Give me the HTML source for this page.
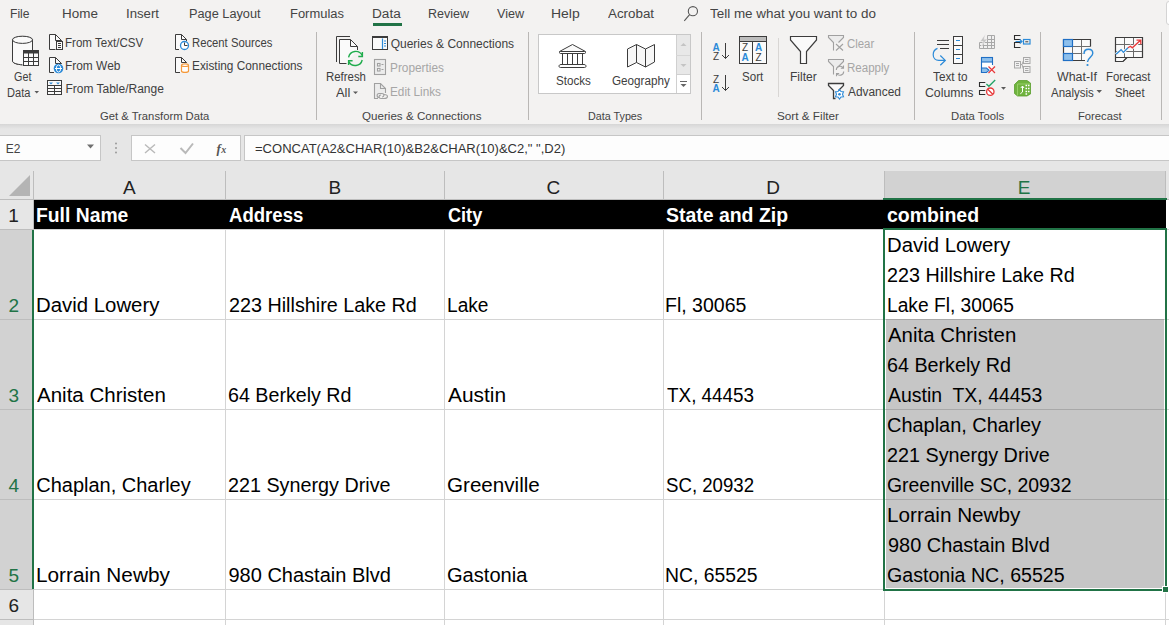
<!DOCTYPE html>
<html><head><meta charset="utf-8"><style>
html,body{margin:0;padding:0;width:1169px;height:625px;overflow:hidden;background:#ffffff;position:relative}
.t{position:absolute;white-space:pre;font-family:"Liberation Sans",sans-serif;transform-origin:0 0}
.r{position:absolute}
</style></head><body>
<div class="r" style="left:0px;top:0px;width:1169px;height:124px;background:#f3f2f1;"></div>
<div class="r" style="left:0px;top:124px;width:1169px;height:47px;background:#e6e6e6;"></div>
<div class="r" style="left:0;top:124px;width:1169px;height:5px;background:linear-gradient(#d6d6d6,#e6e6e6)"></div>
<div class="r" style="left:1166px;top:1px;width:12px;height:24px;background:#ffffff;border:1px solid #d4d4d4;border-radius:3px;box-sizing:border-box;"></div>
<div class="r" style="left:538px;top:34px;width:153px;height:60px;background:#ffffff;border:1px solid #c8c8c8;box-sizing:border-box;"></div>
<div class="r" style="left:676px;top:35px;width:14px;height:39px;background:#e8e8e8;border-left:1px solid #d0d0d0;"></div>
<div class="r" style="left:676px;top:55px;width:14px;height:1px;background:#d6d6d6;"></div>
<div class="r" style="left:676px;top:74px;width:14px;height:19px;background:#ffffff;border-left:1px solid #d0d0d0;border-top:1px solid #d0d0d0;"></div>
<svg class="r" style="left:676px;top:34px" width="15" height="60"><path d="M4.5 12 L7.5 9 L10.5 12 Z" fill="#c4c4c4"/><path d="M4.5 30 L7.5 33 L10.5 30 Z" fill="#c4c4c4"/><path d="M4 47.5 H11" stroke="#666" stroke-width="1"/><path d="M4.5 50 L7.5 53 L10.5 50 Z" fill="#666"/></svg>
<div class="r" style="left:373px;top:23px;width:29px;height:3px;background:#217346;"></div>
<div class="r" style="left:316px;top:32px;width:1px;height:88px;background:#b9b7b5;"></div>
<div class="r" style="left:528px;top:32px;width:1px;height:88px;background:#b9b7b5;"></div>
<div class="r" style="left:701px;top:32px;width:1px;height:88px;background:#b9b7b5;"></div>
<div class="r" style="left:914px;top:32px;width:1px;height:88px;background:#b9b7b5;"></div>
<div class="r" style="left:1040px;top:32px;width:1px;height:88px;background:#b9b7b5;"></div>
<div class="r" style="left:1161px;top:32px;width:1px;height:88px;background:#b9b7b5;"></div>
<div class="r" style="left:778px;top:38px;width:1px;height:59px;background:#d8d6d4;"></div>
<div class="r" style="left:-1px;top:135px;width:101px;height:25px;background:#fdfdfd;border:1px solid #c6c6c6;box-sizing:border-box;width:102px;height:26px;"></div>
<div class="r" style="left:131px;top:135px;width:110px;height:26px;background:#fdfdfd;border:1px solid #c6c6c6;box-sizing:border-box;"></div>
<div class="r" style="left:244px;top:135px;width:930px;height:26px;background:#fdfdfd;border:1px solid #c6c6c6;box-sizing:border-box;"></div>
<div class="r" style="left:0px;top:171px;width:1169px;height:28px;background:#e6e6e6;"></div>
<div class="r" style="left:0px;top:199px;width:33px;height:426px;background:#e6e6e6;"></div>
<div class="r" style="left:0px;top:230px;width:32px;height:359px;background:#d2d2d2;"></div>
<div class="r" style="left:885px;top:171px;width:280px;height:27px;background:#d2d2d2;"></div>
<div class="r" style="left:34px;top:200px;width:1135px;height:425px;background:#ffffff;"></div>
<div class="r" style="left:225px;top:171px;width:1px;height:28px;background:#bdbdbd;"></div>
<div class="r" style="left:225px;top:200px;width:1px;height:425px;background:#d4d4d4;"></div>
<div class="r" style="left:444px;top:171px;width:1px;height:28px;background:#bdbdbd;"></div>
<div class="r" style="left:444px;top:200px;width:1px;height:425px;background:#d4d4d4;"></div>
<div class="r" style="left:663px;top:171px;width:1px;height:28px;background:#bdbdbd;"></div>
<div class="r" style="left:663px;top:200px;width:1px;height:425px;background:#d4d4d4;"></div>
<div class="r" style="left:884px;top:171px;width:1px;height:28px;background:#bdbdbd;"></div>
<div class="r" style="left:884px;top:200px;width:1px;height:425px;background:#d4d4d4;"></div>
<div class="r" style="left:1165px;top:171px;width:1px;height:28px;background:#bdbdbd;"></div>
<div class="r" style="left:1165px;top:200px;width:1px;height:425px;background:#d4d4d4;"></div>
<div class="r" style="left:34px;top:229px;width:1135px;height:1px;background:#d4d4d4;"></div>
<div class="r" style="left:0px;top:229px;width:33px;height:1px;background:#bdbdbd;"></div>
<div class="r" style="left:34px;top:319px;width:1135px;height:1px;background:#d4d4d4;"></div>
<div class="r" style="left:0px;top:319px;width:33px;height:1px;background:#bdbdbd;"></div>
<div class="r" style="left:34px;top:409px;width:1135px;height:1px;background:#d4d4d4;"></div>
<div class="r" style="left:0px;top:409px;width:33px;height:1px;background:#bdbdbd;"></div>
<div class="r" style="left:34px;top:499px;width:1135px;height:1px;background:#d4d4d4;"></div>
<div class="r" style="left:0px;top:499px;width:33px;height:1px;background:#bdbdbd;"></div>
<div class="r" style="left:34px;top:589px;width:1135px;height:1px;background:#d4d4d4;"></div>
<div class="r" style="left:0px;top:589px;width:33px;height:1px;background:#bdbdbd;"></div>
<div class="r" style="left:34px;top:619px;width:1135px;height:1px;background:#d4d4d4;"></div>
<div class="r" style="left:0px;top:619px;width:33px;height:1px;background:#bdbdbd;"></div>
<div class="r" style="left:0px;top:199px;width:1169px;height:1px;background:#bdbdbd;"></div>
<div class="r" style="left:33px;top:171px;width:1px;height:454px;background:#bdbdbd;"></div>
<div class="r" style="left:883px;top:198px;width:284px;height:2px;background:#217346;"></div>
<div class="r" style="left:34px;top:200px;width:1132px;height:29px;background:#000000;"></div>
<div class="r" style="left:886px;top:319px;width:278px;height:269px;background:#c6c6c6;"></div>
<div class="r" style="left:886px;top:409px;width:278px;height:1px;background:#a8a8a8;"></div>
<div class="r" style="left:886px;top:499px;width:278px;height:1px;background:#a8a8a8;"></div>
<div class="r" style="left:886px;top:319px;width:278px;height:1px;background:#a8a8a8;"></div>
<div class="r" style="left:883px;top:228px;width:284px;height:2px;background:#217346;"></div>
<div class="r" style="left:883px;top:228px;width:2px;height:363px;background:#217346;"></div>
<div class="r" style="left:1165px;top:228px;width:2px;height:359px;background:#217346;"></div>
<div class="r" style="left:883px;top:589px;width:280px;height:2px;background:#217346;"></div>
<div class="r" style="left:1162px;top:586px;width:7px;height:7px;background:#ffffff;"></div>
<div class="r" style="left:1163px;top:587px;width:5px;height:5px;background:#217346;"></div>
<div class="r" style="left:32px;top:230px;width:2px;height:359px;background:#217346;"></div>
<svg class="r" style="left:0;top:171px" width="33" height="28"><polygon points="9,25 30,25 30,4" fill="#b4b4b4"/></svg>
<div class="t" style="left:10.29px;top:7.85px;font-size:12px;line-height:12px;color:#444444;transform:scaleX(1.0112);">File</div>
<div class="t" style="left:62.18px;top:7.85px;font-size:12px;line-height:12px;color:#444444;transform:scaleX(1.1213);">Home</div>
<div class="t" style="left:125.79px;top:7.85px;font-size:12px;line-height:12px;color:#444444;transform:scaleX(1.1003);">Insert</div>
<div class="t" style="left:189.24px;top:7.85px;font-size:12px;line-height:12px;color:#444444;transform:scaleX(1.0617);">Page Layout</div>
<div class="t" style="left:289.92px;top:7.85px;font-size:12px;line-height:12px;color:#444444;transform:scaleX(1.0782);">Formulas</div>
<div class="t" style="left:371.86px;top:7.85px;font-size:12px;line-height:12px;color:#444444;transform:scaleX(1.1352);">Data</div>
<div class="t" style="left:427.96px;top:7.85px;font-size:12px;line-height:12px;color:#444444;transform:scaleX(1.0417);">Review</div>
<div class="t" style="left:496.89px;top:7.85px;font-size:12px;line-height:12px;color:#444444;transform:scaleX(1.0506);">View</div>
<div class="t" style="left:550.84px;top:7.85px;font-size:12px;line-height:12px;color:#444444;transform:scaleX(1.1638);">Help</div>
<div class="t" style="left:608.00px;top:7.85px;font-size:12px;line-height:12px;color:#444444;transform:scaleX(1.1138);">Acrobat</div>
<div class="t" style="left:709.66px;top:7.85px;font-size:12px;line-height:12px;color:#444444;transform:scaleX(1.1202);">Tell me what you want to do</div>
<div class="t" style="left:65.44px;top:36.85px;font-size:12px;line-height:12px;color:#404040;transform:scaleX(0.9637);">From Text/CSV</div>
<div class="t" style="left:65.41px;top:59.85px;font-size:12px;line-height:12px;color:#404040;transform:scaleX(0.9926);">From Web</div>
<div class="t" style="left:65.40px;top:82.85px;font-size:12px;line-height:12px;color:#404040;">From Table/Range</div>
<div class="t" style="left:191.56px;top:36.85px;font-size:12px;line-height:12px;color:#404040;transform:scaleX(0.9405);">Recent Sources</div>
<div class="t" style="left:191.51px;top:59.85px;font-size:12px;line-height:12px;color:#404040;transform:scaleX(0.9864);">Existing Connections</div>
<div class="t" style="left:390.70px;top:37.85px;font-size:12px;line-height:12px;color:#404040;">Queries &amp; Connections</div>
<div class="t" style="left:390.32px;top:61.85px;font-size:12px;line-height:12px;color:#a6a6a6;transform:scaleX(0.9850);">Properties</div>
<div class="t" style="left:390.32px;top:85.85px;font-size:12px;line-height:12px;color:#a6a6a6;transform:scaleX(0.9802);">Edit Links</div>
<div class="t" style="left:846.93px;top:37.85px;font-size:12px;line-height:12px;color:#a6a6a6;transform:scaleX(0.9498);">Clear</div>
<div class="t" style="left:846.54px;top:61.85px;font-size:12px;line-height:12px;color:#a6a6a6;transform:scaleX(0.9605);">Reapply</div>
<div class="t" style="left:847.50px;top:85.85px;font-size:12px;line-height:12px;color:#404040;transform:scaleX(0.9905);">Advanced</div>
<div class="t" style="left:14.16px;top:70.85px;font-size:12px;line-height:12px;color:#404040;transform:scaleX(0.8984);">Get</div>
<div class="t" style="left:6.58px;top:86.85px;font-size:12px;line-height:12px;color:#404040;transform:scaleX(0.9221);">Data</div>
<div class="t" style="left:326.35px;top:70.85px;font-size:12px;line-height:12px;color:#404040;transform:scaleX(0.9502);">Refresh</div>
<div class="t" style="left:336.00px;top:86.85px;font-size:12px;line-height:12px;color:#404040;transform:scaleX(1.0714);">All</div>
<div class="t" style="left:555.52px;top:74.85px;font-size:12px;line-height:12px;color:#404040;transform:scaleX(0.9687);">Stocks</div>
<div class="t" style="left:611.82px;top:74.85px;font-size:12px;line-height:12px;color:#404040;transform:scaleX(0.9745);">Geography</div>
<div class="t" style="left:741.72px;top:70.85px;font-size:12px;line-height:12px;color:#404040;transform:scaleX(0.9628);">Sort</div>
<div class="t" style="left:790.40px;top:70.85px;font-size:12px;line-height:12px;color:#404040;transform:scaleX(1.0039);">Filter</div>
<div class="t" style="left:932.61px;top:70.85px;font-size:12px;line-height:12px;color:#404040;transform:scaleX(0.9798);">Text to</div>
<div class="t" style="left:924.89px;top:86.85px;font-size:12px;line-height:12px;color:#404040;transform:scaleX(1.0238);">Columns</div>
<div class="t" style="left:1057.10px;top:70.85px;font-size:12px;line-height:12px;color:#404040;transform:scaleX(1.0311);">What-If</div>
<div class="t" style="left:1051.00px;top:86.85px;font-size:12px;line-height:12px;color:#404040;transform:scaleX(0.9594);">Analysis</div>
<div class="t" style="left:1106.45px;top:70.85px;font-size:12px;line-height:12px;color:#404040;transform:scaleX(0.9518);">Forecast</div>
<div class="t" style="left:1114.53px;top:86.85px;font-size:12px;line-height:12px;color:#404040;transform:scaleX(0.9416);">Sheet</div>
<div class="t" style="left:100.01px;top:110.76px;font-size:11.4px;line-height:11.4px;color:#444444;transform:scaleX(0.9873);">Get &amp; Transform Data</div>
<div class="t" style="left:362.49px;top:110.76px;font-size:11.4px;line-height:11.4px;color:#444444;transform:scaleX(1.0198);">Queries &amp; Connections</div>
<div class="t" style="left:587.55px;top:110.76px;font-size:11.4px;line-height:11.4px;color:#444444;transform:scaleX(0.9448);">Data Types</div>
<div class="t" style="left:777.18px;top:110.76px;font-size:11.4px;line-height:11.4px;color:#444444;transform:scaleX(1.0303);">Sort &amp; Filter</div>
<div class="t" style="left:950.71px;top:110.76px;font-size:11.4px;line-height:11.4px;color:#444444;transform:scaleX(0.9924);">Data Tools</div>
<div class="t" style="left:1078.11px;top:110.76px;font-size:11.4px;line-height:11.4px;color:#444444;transform:scaleX(0.9839);">Forecast</div>
<div class="t" style="left:5.70px;top:142.85px;font-size:12px;line-height:12px;color:#444444;">E2</div>
<div class="t" style="left:255.38px;top:143.43px;font-size:12.5px;line-height:12.5px;color:#333333;transform:scaleX(1.0415);">=CONCAT(A2&amp;CHAR(10)&amp;B2&amp;CHAR(10)&amp;C2," ",D2)</div>
<div class="t" style="left:123.00px;top:177.93px;font-size:19px;line-height:19px;color:#222222;">A</div>
<div class="t" style="left:328.40px;top:177.93px;font-size:19px;line-height:19px;color:#222222;">B</div>
<div class="t" style="left:546.50px;top:177.93px;font-size:19px;line-height:19px;color:#222222;">C</div>
<div class="t" style="left:766.35px;top:177.93px;font-size:19px;line-height:19px;color:#222222;">D</div>
<div class="t" style="left:1017.80px;top:177.93px;font-size:19px;line-height:19px;color:#217346;">E</div>
<div class="t" style="left:8.30px;top:205.93px;font-size:19px;line-height:19px;color:#222222;">1</div>
<div class="t" style="left:8.55px;top:295.93px;font-size:19px;line-height:19px;color:#217346;">2</div>
<div class="t" style="left:8.60px;top:385.93px;font-size:19px;line-height:19px;color:#217346;">3</div>
<div class="t" style="left:8.60px;top:475.93px;font-size:19px;line-height:19px;color:#217346;">4</div>
<div class="t" style="left:8.50px;top:565.93px;font-size:19px;line-height:19px;color:#217346;">5</div>
<div class="t" style="left:8.45px;top:595.93px;font-size:19px;line-height:19px;color:#222222;">6</div>
<div class="t" style="left:35.74px;top:205.08px;font-size:20px;line-height:20px;color:#ffffff;font-weight:bold;transform:scaleX(0.9658);">Full Name</div>
<div class="t" style="left:228.94px;top:205.08px;font-size:20px;line-height:20px;color:#ffffff;font-weight:bold;transform:scaleX(0.9288);">Address</div>
<div class="t" style="left:447.88px;top:205.08px;font-size:20px;line-height:20px;color:#ffffff;font-weight:bold;transform:scaleX(0.9051);">City</div>
<div class="t" style="left:666.02px;top:205.08px;font-size:20px;line-height:20px;color:#ffffff;font-weight:bold;transform:scaleX(0.9718);">State and Zip</div>
<div class="t" style="left:887.22px;top:205.08px;font-size:20px;line-height:20px;color:#ffffff;font-weight:bold;transform:scaleX(0.9751);">combined</div>
<div class="t" style="left:36.07px;top:295.08px;font-size:20px;line-height:20px;color:#000000;transform:scaleX(1.0184);">David Lowery</div>
<div class="t" style="left:228.51px;top:295.08px;font-size:20px;line-height:20px;color:#000000;transform:scaleX(0.9878);">223 Hillshire Lake Rd</div>
<div class="t" style="left:447.47px;top:295.08px;font-size:20px;line-height:20px;color:#000000;transform:scaleX(0.9559);">Lake</div>
<div class="t" style="left:665.44px;top:295.08px;font-size:20px;line-height:20px;color:#000000;transform:scaleX(0.9753);">Fl, 30065</div>
<div class="t" style="left:37.20px;top:385.08px;font-size:20px;line-height:20px;color:#000000;transform:scaleX(1.0257);">Anita Christen</div>
<div class="t" style="left:228.42px;top:385.08px;font-size:20px;line-height:20px;color:#000000;transform:scaleX(0.9830);">64 Berkely Rd</div>
<div class="t" style="left:448.00px;top:385.08px;font-size:20px;line-height:20px;color:#000000;transform:scaleX(1.0442);">Austin</div>
<div class="t" style="left:666.62px;top:385.08px;font-size:20px;line-height:20px;color:#000000;transform:scaleX(0.9440);">TX, 44453</div>
<div class="t" style="left:36.20px;top:475.08px;font-size:20px;line-height:20px;color:#000000;">Chaplan, Charley</div>
<div class="t" style="left:228.41px;top:475.08px;font-size:20px;line-height:20px;color:#000000;transform:scaleX(0.9877);">221 Synergy Drive</div>
<div class="t" style="left:446.97px;top:475.08px;font-size:20px;line-height:20px;color:#000000;transform:scaleX(1.0306);">Greenville</div>
<div class="t" style="left:666.16px;top:475.08px;font-size:20px;line-height:20px;color:#000000;transform:scaleX(0.9320);">SC, 20932</div>
<div class="t" style="left:35.54px;top:565.08px;font-size:20px;line-height:20px;color:#000000;transform:scaleX(1.0377);">Lorrain Newby</div>
<div class="t" style="left:228.50px;top:565.08px;font-size:20px;line-height:20px;color:#000000;">980 Chastain Blvd</div>
<div class="t" style="left:447.00px;top:565.08px;font-size:20px;line-height:20px;color:#000000;transform:scaleX(1.0038);">Gastonia</div>
<div class="t" style="left:665.45px;top:565.08px;font-size:20px;line-height:20px;color:#000000;transform:scaleX(0.9689);">NC, 65525</div>
<div class="t" style="left:886.77px;top:235.08px;font-size:20px;line-height:20px;color:#000000;transform:scaleX(1.0167);">David Lowery</div>
<div class="t" style="left:887.41px;top:265.08px;font-size:20px;line-height:20px;color:#000000;transform:scaleX(0.9872);">223 Hillshire Lake Rd</div>
<div class="t" style="left:886.87px;top:295.08px;font-size:20px;line-height:20px;color:#000000;transform:scaleX(0.9592);">Lake Fl, 30065</div>
<div class="t" style="left:888.40px;top:325.08px;font-size:20px;line-height:20px;color:#000000;transform:scaleX(1.0209);">Anita Christen</div>
<div class="t" style="left:887.41px;top:355.08px;font-size:20px;line-height:20px;color:#000000;transform:scaleX(0.9862);">64 Berkely Rd</div>
<div class="t" style="left:888.40px;top:385.08px;font-size:20px;line-height:20px;color:#000000;transform:scaleX(0.9721);">Austin  TX, 44453</div>
<div class="t" style="left:887.40px;top:415.08px;font-size:20px;line-height:20px;color:#000000;transform:scaleX(0.9961);">Chaplan, Charley</div>
<div class="t" style="left:887.41px;top:445.08px;font-size:20px;line-height:20px;color:#000000;transform:scaleX(0.9895);">221 Synergy Drive</div>
<div class="t" style="left:887.43px;top:475.08px;font-size:20px;line-height:20px;color:#000000;transform:scaleX(0.9702);">Greenville SC, 20932</div>
<div class="t" style="left:886.74px;top:505.08px;font-size:20px;line-height:20px;color:#000000;transform:scaleX(1.0345);">Lorrain Newby</div>
<div class="t" style="left:887.50px;top:535.08px;font-size:20px;line-height:20px;color:#000000;transform:scaleX(0.9963);">980 Chastain Blvd</div>
<div class="t" style="left:887.42px;top:565.08px;font-size:20px;line-height:20px;color:#000000;transform:scaleX(0.9805);">Gastonia NC, 65525</div>
<svg style="position:absolute;left:0;top:0" width="1169" height="170" viewBox="0 0 1169 170">
<g fill="none" stroke="#3c3c3c" stroke-width="1">
<!-- Get Data cylinder -->
<path d="M12.5 40 V61 C12.5 63 17 64.5 22.5 64.8" fill="#fafafa"/>
<path d="M12.5 40 C12.5 35.5 32.5 35.5 32.5 40 V50" fill="#fafafa"/>
<path d="M12.5 40 V61 C12.5 63.5 22 65 23 65 L23 50 H32.5 V40" fill="#fafafa" stroke="none"/>
<path d="M12.5 40 V61 C12.5 63 17 64.5 22.5 64.8"/>
<path d="M32.5 40 V50"/>
<ellipse cx="22.5" cy="39.8" rx="10" ry="3.6" fill="#fafafa"/>
<rect x="23.5" y="50.5" width="15" height="15" fill="#fafafa"/>
<rect x="23.5" y="50.5" width="15" height="3" fill="#3c3c3c" stroke="none"/>
<path d="M28.5 53 V65.5 M33.5 53 V65.5 M23.5 57.5 H38.5 M23.5 61.5 H38.5"/>
<!-- From Text/CSV -->
<path d="M55.5 49.5 H49.5 V34.5 H55.5 L61.5 40.5 V41" fill="#fafafa"/>
<path d="M55.5 34.5 V40.5 H61.5"/>
<rect x="56.5" y="41.5" width="6" height="8" fill="#fafafa"/>
<path d="M58 43.5 H61 M58 45.5 H61 M58 47.5 H61"/>
<!-- From Web -->
<path d="M54 72.5 H49.5 V57.5 H55.5 L61.5 63.5 V64" fill="#fafafa"/>
<path d="M55.5 57.5 V63.5 H61.5"/>
<!-- From Table/Range -->
<rect x="47.5" y="80.5" width="14" height="14" fill="#fafafa"/>
<path d="M47.5 85.5 H61.5 M47.5 88.5 H61.5 M47.5 91.5 H61.5 M54.5 85.5 V94.5"/>
<!-- Recent Sources -->
<path d="M179 49.5 H175.5 V34.5 H181.5 L186.5 39.5 V41" fill="#fafafa"/>
<path d="M181.5 34.5 V39.5 H186.5"/>
<!-- Existing Connections -->
<path d="M180 72.5 H175.5 V57.5 H181.5 L186.5 62.5 V63" fill="#fafafa"/>
<path d="M181.5 57.5 V62.5 H186.5"/>
<!-- Refresh All -->
<path d="M336.5 62 V36.5 H350"/>
<path d="M346.5 63.5 H339.5 V39.5 H350.5 L357.5 46.5 V50" fill="#fafafa"/>
<path d="M350.5 39.5 V46.5 H357.5"/>
<!-- Queries & Connections -->
<rect x="372.5" y="36.5" width="15" height="13" fill="#fafafa"/>
<path d="M372.5 37.5 H387.5"/>
<!-- Stocks bank -->
<path d="M559.5 51.5 L572.5 44.5 L585.5 51.5 Z" fill="#fafafa" stroke-linejoin="round"/>
<rect x="559.5" y="51.5" width="26" height="2" rx="1" fill="#ffffff"/>
<path d="M562.5 54 V64.5 M567.5 54 V64.5 M572.5 54 V64.5 M577.5 54 V64.5 M582.5 54 V64.5"/>
<path d="M561 64.5 H584 C585.5 64.5 586 65.5 586 66 C586 67 585.5 67.5 584.5 67.5 H560.5 C559.5 67.5 559 67 559 66 C559 65.5 559.5 64.5 561 64.5 Z" fill="#ffffff"/>
<!-- Geography map -->
<path d="M627.5 49 L636.5 44.5 L645.5 49 L654.5 44.5 V62 L645.5 67 L636.5 62.5 L627.5 67 Z" fill="#f7f7f7" stroke-linejoin="round"/>
<path d="M636.5 44.5 V62.5 M645.5 49 V67"/>
<!-- Sort box -->
<rect x="739.5" y="36.5" width="27" height="27" fill="#fafafa"/>
<rect x="740" y="37" width="26" height="4" fill="#bdbdbd" stroke="none"/>
<path d="M739.5 41.5 H766.5 M752.5 41.5 V63.5"/>
<!-- AZ / ZA arrows -->
<path d="M725.5 43 V58.5 M722 55 L725.5 58.5 L729 55"/>
<path d="M725.5 75 V90.5 M722 87 L725.5 90.5 L729 87"/>
<!-- Filter -->
<path d="M790.5 36.5 H816.5 V40 L806.5 51.5 V63.5 H800.5 V51.5 L790.5 40 Z" fill="#fafafa" stroke-linejoin="miter" stroke-width="1.2"/>
<!-- Advanced funnel -->
<path d="M828.5 83.5 H843.5 V85.5 L838.5 90.5 V91 H834 L828.5 85.5 Z" fill="#fafafa" stroke="none"/><path d="M835.5 98.5 H833.5 V90.5 L828.5 85.5 V83.5 H843.5 V85.5 L838.5 90.5" stroke-width="1.3"/>
<!-- Text to Columns -->
<path d="M937 40.5 H949 M937 44.5 H949 M940 48.5 H949" stroke-width="1.1"/>
<rect x="953.5" y="36.5" width="9" height="27" fill="#fafafa"/>
<path d="M953.5 45.5 H962.5 M953.5 54.5 H962.5"/>
<!-- What-If grid -->
<rect x="1063.5" y="39.5" width="27" height="21" fill="#fafafa" stroke="none"/>
<path d="M1072.5 39.5 V60.5 M1081.5 39.5 V60.5 M1063.5 46.5 H1090.5 M1063.5 53.5 H1084" stroke="#6e6e6e"/>
<path d="M1063.5 39.5 H1090.5 V46.5 M1063.5 39.5 V60.5 H1085" stroke-width="1.2"/>
<!-- Forecast sheet -->
<path d="M1115.5 37.5 H1142.5 V57.5 H1127 L1123 61.5 H1115.5 Z" fill="#fafafa"/>
<path d="M1124.5 37.5 V57.5 M1133.5 37.5 V57.5 M1115.5 44.5 H1142.5 M1115.5 51.5 H1142.5" stroke="#6a6a6a"/>
<path d="M1115.5 37.5 H1142.5 V57.5 H1115.5 Z M1115.5 57.5 V61.5 H1123 L1127 57.5" stroke-width="1.2"/>
</g>
<!-- blue / colored elements -->
<g fill="none" stroke-width="1.2">
<circle cx="58.5" cy="68.5" r="4.8" fill="#2b8ad8" stroke="none"/>
<path d="M55 68.5 H62" stroke="#ffffff" stroke-width="1"/>
<ellipse cx="58.5" cy="68.5" rx="2.2" ry="3.6" stroke="#ffffff" stroke-width="0.9"/>
<path d="M49 82.5 H53 L51 84.5 Z M56 82.5 H60 L58 84.5 Z" fill="#2b8ad8" stroke="none"/>
<circle cx="184.5" cy="45.5" r="4" fill="#ffffff" stroke="#2b8ad8" stroke-width="1.3"/>
<path d="M184.5 42.5 V45.5 H187.5" stroke="#3c3c3c" stroke-width="1"/>
<path d="M181.5 65.2 C181.5 63.3 188.5 63.3 188.5 65.2 V71 C188.5 72.9 181.5 72.9 181.5 71 Z" fill="#ffffff" stroke="#f59a3c" stroke-width="1.2"/>
<path d="M181.5 65.2 C181.5 67 188.5 67 188.5 65.2" stroke="#f59a3c" stroke-width="1.1"/>
<path d="M348.6 57.3 A7.2 7.2 0 0 1 362.2 55.5 M362.2 60 A7.2 7.2 0 0 1 348.8 61.6" stroke="#1fac4c" stroke-width="1.4"/>
<path d="M358.3 56.5 H362.4 V52 M352.6 60.7 H348.6 V65" stroke="#1fac4c" stroke-width="1.4"/>
<path d="M382.5 38.5 V49" stroke="#2b8ad8" stroke-width="1.2"/>
<path d="M384 41 H386 M384 43.5 H386 M384 46 H386" stroke="#2b8ad8" stroke-width="1.2"/>
<path d="M937.5 48.4 C934.5 49.5 933.2 52 933.2 54.7 C933.2 58 935.5 60.4 938.8 60.4 H945.2 M940.3 55.5 L945.3 60.4 L940.3 65.3" stroke="#2b8ad8" stroke-width="1.2"/>
<path d="M956 40.5 H960 M956 49.5 H960 M956 58.5 H960" stroke="#2b8ad8" stroke-width="1.1"/>
<rect x="1063.5" y="39.5" width="9" height="7" fill="#8ec0ec" stroke="#1f6fc5"/>
<rect x="1063.5" y="53.5" width="9" height="7" fill="#8ec0ec" stroke="#1f6fc5"/>
<path d="M1084 54 C1084 51 1086 49.3 1088.5 49.3 C1091 49.3 1092.8 51 1092.8 53.3 C1092.8 56.5 1088 57.5 1087.5 62" stroke="#f3f2f1" stroke-width="3.5"/>
<path d="M1084 54 C1084 51 1086 49.3 1088.5 49.3 C1091 49.3 1092.8 51 1092.8 53.3 C1092.8 56.5 1088 57.5 1087.5 62" stroke="#2b8ad8" stroke-width="1.4"/>
<circle cx="1087.5" cy="65" r="1.1" fill="#2b8ad8" stroke="none"/>
<path d="M1116 54.3 L1121.1 49.7 L1123.4 52.4 L1128 47.8 L1130.4 46.2 L1132.3 47.8 L1140.8 40.1" stroke="#fafafa" stroke-width="3"/>
<path d="M1116 54.3 L1121.1 49.7 L1123.4 52.4 L1128 47.8" stroke="#2b8ad8" stroke-width="1.3"/>
<path d="M1128 47.8 L1130.4 46.2 L1132.3 47.8 L1140.8 40.1 M1136.5 40.1 H1140.8 V44.3" stroke="#e8393a" stroke-width="1.3"/>
<!-- Advanced gear -->
<path d="M839.5 89.5 L841 91.5 L843.5 91.7 L842.5 94.3 L843.5 96.8 L841 97 L839.5 99 L838 97 L835.5 96.8 L836.5 94.3 L835.5 91.7 L838 91.5 Z" fill="#ffffff" stroke="#2b8ad8" stroke-width="1.1"/>
<circle cx="839.5" cy="94.3" r="1.3" fill="#2b8ad8" stroke="none"/>
</g>
<!-- disabled gray icons -->
<g fill="none" stroke="#a0a0a0" stroke-width="1.1">
<rect x="374.5" y="59.5" width="11" height="15" fill="#ececec"/>
<rect x="377.5" y="63.5" width="2.5" height="2.5" fill="#f6f6f6"/>
<rect x="377.5" y="68.5" width="2.5" height="2.5" fill="#f6f6f6"/>
<path d="M381.5 64.5 H383.5 M381.5 69.5 H383.5"/>
<path d="M378 98.5 H374.5 V83.5 H380.5 L385.5 88.5 V93" fill="#ececec"/>
<path d="M380.5 83.5 V88.5 H385.5"/>
<path d="M379 97.5 C376.5 97.5 376.5 93.5 379 93.5 H382 C384.5 93.5 384.5 97 382 97 M384 94.5 C386.5 94.5 387.5 95 387.5 96.5 C387.5 98 386.5 98.5 384 98.5 H381 C378.5 98.5 378.5 95 381 95" stroke-width="1.1"/>
<!-- clear funnel -->
<path d="M828.5 35.5 H843.5 V37.5 L838.5 42.5 H834 L828.5 37.5 Z" fill="#ececec" stroke="none"/><path d="M833.5 50.5 V42.5 L828.5 37.5 V35.5 H843.5 V37.5 L838.5 42.5"/>
<path d="M836 44 L843 50.5 M843 44 L836 50.5"/>
<!-- reapply -->
<path d="M828.5 59.5 H843.5 V61.5 L838.5 66.5 H834 L828.5 61.5 Z" fill="#ececec" stroke="none"/><path d="M833.5 74.5 V66.5 L828.5 61.5 V59.5 H843.5 V61.5 L838.5 66.5"/>
<path d="M836.3 70 A3.8 3.8 0 0 1 843.3 68 M843.7 71.5 A3.8 3.8 0 0 1 836.7 73.5 M843.5 65.5 V68.3 H840.8 M836.5 76.3 V73.5 H839.2" stroke-width="1.1"/>
</g>

<g fill="none" stroke-width="1">
<!-- flash fill -->
<path d="M979.5 42.5 V48.5 H994.5 V35.5 H987.5 V39.5 H983.5 V42.5 Z M979.5 45.5 H994.5 M983.5 42.5 H994.5 M987.5 39.5 H994.5 M983.5 42.5 V48.5 M987.5 39.5 V48.5 M991.5 35.5 V48.5" stroke="#a8a8a8" fill="#f0f0f0"/>
<path d="M985.5 34 L980 41.5 H983.2 L981 47 L987 39.5 H984 Z" fill="#c4c4c4" stroke="#f3f2f1" stroke-width="0.6"/>
<!-- remove duplicates -->
<rect x="981.5" y="57.5" width="11" height="15" fill="#ffffff" stroke="none"/>
<rect x="981.5" y="57.5" width="11" height="4.5" fill="#8ec0ec" stroke="#1f6fc5" stroke-width="1.1"/>
<path d="M981.5 62 V72.5 H985 M992.5 62 V65" stroke="#1f6fc5" stroke-width="1.1"/>
<path d="M981.5 68 H986.5 L989 70.3 L986.5 72.5 H981.5 Z" fill="#8ec0ec" stroke="#1f6fc5" stroke-width="1.1"/>
<path d="M988.5 66.5 L995 73 M995 66.5 L988.5 73" stroke="#e8393a" stroke-width="1.2"/>
<!-- data validation -->
<path d="M985.3 82.5 H979.5 V86.5 H985.3 M985.3 90.5 H979.5 V94.5 H985.3" stroke="#2c2c2c" stroke-width="1.1"/>
<path d="M986.4 84 L988.9 86.3 L995.2 80" stroke="#21a366" stroke-width="1.3"/>
<circle cx="990.3" cy="91.7" r="3.7" stroke="#e8393a" stroke-width="1.3" fill="#ffffff"/>
<path d="M987.8 89.2 L992.8 94.2" stroke="#e8393a" stroke-width="1.3"/>
<!-- consolidate -->
<path d="M1020.5 35.5 H1014.5 V39.5 H1020.5 M1020.5 42.5 H1014.5 V47.5 H1020.5" stroke="#2c2c2c" stroke-width="1.1"/>
<path d="M1015.5 41.5 H1022 M1019.8 39.3 L1022 41.5 L1019.8 43.7" stroke="#2b8ad8" stroke-width="1.2"/>
<rect x="1023.5" y="39.5" width="6.5" height="4.5" stroke="#2b8ad8" stroke-width="1.2"/>
<path d="M1025.3 41.8 H1028.3" stroke="#3c3c3c" stroke-width="1"/>
<!-- relationships -->
<g stroke="#a8a8a8">
<rect x="1014.5" y="61.5" width="6" height="6.5" fill="#f0f0f0"/>
<rect x="1023.5" y="57.5" width="6.5" height="6" fill="#f0f0f0"/>
<rect x="1023.5" y="66.5" width="6.5" height="6" fill="#f0f0f0"/>
<path d="M1016 63.5 H1019 M1016 65.5 H1019 M1025 59.5 H1028.5 M1025 61.5 H1028.5 M1025 68.5 H1028.5 M1025 70.5 H1028.5 M1020.5 64.5 H1022 L1023.5 60.5 M1022 64.5 L1023.5 69.5"/>
</g>
<!-- data model -->
<path d="M1014.5 84.5 L1018.5 80.5 H1027 L1030.5 83 V94 L1027 96 H1017.5 L1014.5 93.5 Z" fill="#6fb33e" stroke="#5a9e2d" stroke-width="0.8"/>
<path d="M1017.5 84 H1030 M1017.5 84 V95.5" stroke="#9ad16a" stroke-width="0.9"/>
<path d="M1025.5 85.5 h1.6 M1028 85.5 h1.5 M1025.5 88.5 h1.6 M1028 88.5 h1.5 M1025.5 91.5 h1.6 M1028 91.5 h1.5 M1025.5 94 h1.6" stroke="#ffffff" stroke-width="1.4"/>
<path d="M1022.5 86 V92 L1020.3 93.8 M1020.8 88 L1022.5 86 L1024 88" stroke="#ffffff" stroke-width="1"/>
</g>
<!-- text glyphs in icons -->
<g font-family="Liberation Sans" font-size="10">
<text x="712.5" y="50.5" fill="#2b8ad8" font-weight="bold">A</text>
<text x="713" y="59.5" fill="#3c3c3c">Z</text>
<text x="713" y="82.5" fill="#3c3c3c">Z</text>
<text x="712.5" y="91.5" fill="#2b8ad8" font-weight="bold">A</text>
<text x="742" y="51" fill="#3c3c3c">Z</text>
<text x="741.5" y="60.5" fill="#2b8ad8" font-weight="bold">A</text>
<text x="755" y="51" fill="#2b8ad8" font-weight="bold">A</text>
<text x="755.5" y="60.5" fill="#3c3c3c">Z</text>
</g>
<!-- search icon -->
<g fill="none" stroke="#555" stroke-width="1.1">
<circle cx="692.9" cy="11.2" r="4.6"/>
<path d="M689.6 14.6 L684.3 20.8"/>
</g>
<!-- dropdown arrows -->
<g fill="#5a5a5a">
<path d="M34.5 91 H39 L36.75 93.5 Z"/>
<path d="M353 91.5 H358 L355.5 94 Z"/>
<path d="M1001 87 H1006 L1003.5 89.7 Z"/>
<path d="M1096.5 90 H1102 L1099.25 93 Z"/>
<path d="M87 144.5 H94 L90.5 148.5 Z" fill="#707070"/>
<circle cx="116" cy="143.5" r="1" fill="#9a9a9a"/>
<circle cx="116" cy="148" r="1" fill="#9a9a9a"/>
<circle cx="116" cy="152.5" r="1" fill="#9a9a9a"/>
</g>
<!-- gallery box -->
<rect x="538.5" y="34.5" width="152" height="59" fill="none" stroke="#c8c8c8"/>
<!-- formula X check fx -->
<g fill="none" stroke="#b9b9b9" stroke-width="1.4">
<path d="M145 144.5 L155 153 M155 144.5 L145 153"/>
<path d="M180.5 148 L185.5 153 L193 143.5" stroke-width="2"/>
</g>
<text x="216.5" y="153" font-family="Liberation Serif" font-style="italic" font-weight="bold" font-size="13" fill="#555">f<tspan font-size="10" dx="0.5">x</tspan></text>
</svg>

</body></html>
